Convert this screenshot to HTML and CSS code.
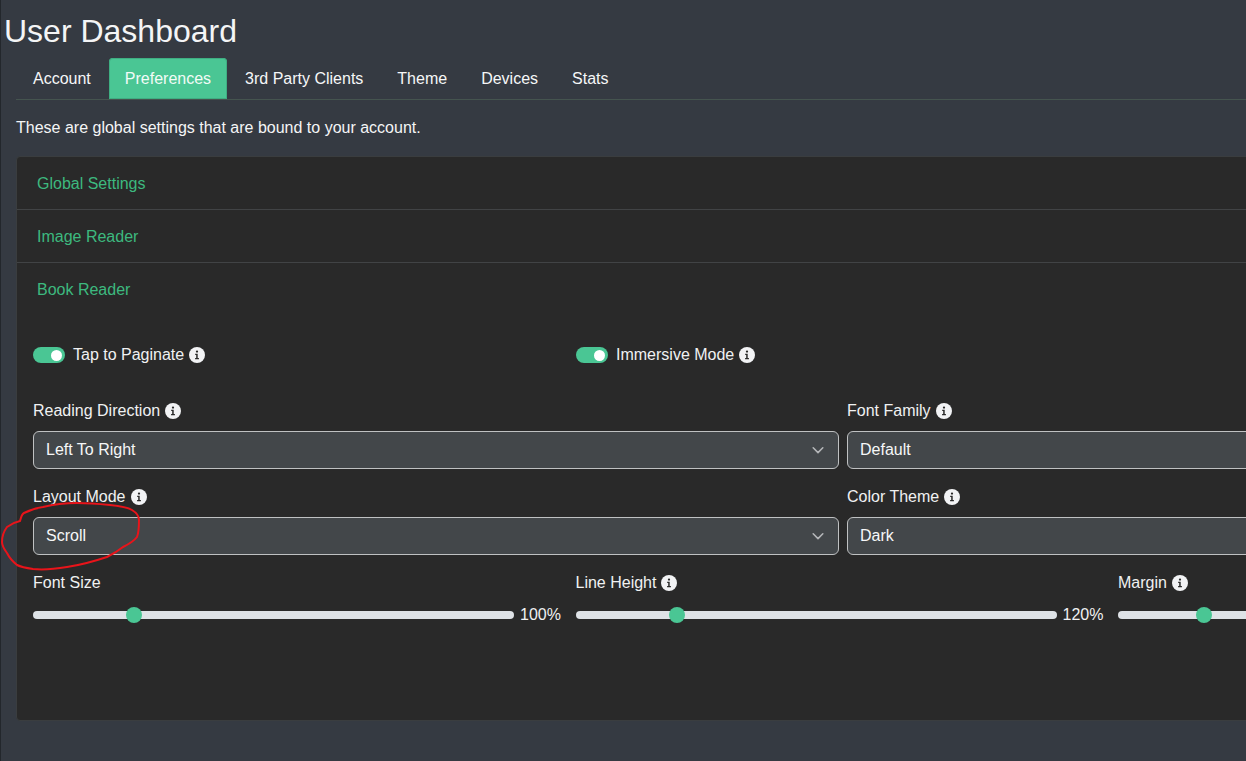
FILE: index.html
```html
<!DOCTYPE html>
<html lang="en">
<head>
<meta charset="utf-8">
<title>User Dashboard</title>
<link rel="stylesheet" href="styles.css">
</head>
<body>
<svg width="0" height="0" class="defs" aria-hidden="true">
  <symbol id="info" viewBox="0 0 16 16">
    <circle cx="8" cy="8" r="8" fill="#f2f3f5"/>
    <circle cx="8" cy="4.6" r="1.15" fill="#292929"/>
    <path d="M6.2 6.8H8.7V10.9H9.9V12.2H6.1V10.9H7.2V8.1H6.2Z" fill="#292929"/>
  </symbol>
  <symbol id="chev" viewBox="0 0 16 16">
    <path d="M2.5 5.5L8 11L13.5 5.5" fill="none" stroke="#b4b6b8" stroke-width="1.8" stroke-linecap="round" stroke-linejoin="round"/>
  </symbol>
</svg>
<main class="page">
  <h1 class="title">User Dashboard</h1>
  <nav class="tabs">
    <a class="tab">Account</a>
    <a class="tab active">Preferences</a>
    <a class="tab">3rd Party Clients</a>
    <a class="tab">Theme</a>
    <a class="tab">Devices</a>
    <a class="tab">Stats</a>
  </nav>
  <p class="intro">These are global settings that are bound to your account.</p>
  <section class="card">
    <h2 class="acc-head">Global Settings</h2>
    <h2 class="acc-head">Image Reader</h2>
    <h2 class="acc-head open">Book Reader</h2>
    <div class="acc-body">
      <div class="toggles">
        <div class="toggle-cell">
          <span class="switch"></span><span class="lbl">Tap to Paginate</span>
          <svg class="ico"><use href="#info"/></svg>
        </div>
        <div class="toggle-cell">
          <span class="switch"></span><span class="lbl">Immersive Mode</span>
          <svg class="ico"><use href="#info"/></svg>
        </div>
      </div>
      <div class="selects">
        <div class="field">
          <div class="label-row"><span class="lbl">Reading Direction</span><svg class="ico"><use href="#info"/></svg></div>
          <div class="select"><span>Left To Right</span><svg class="chev"><use href="#chev"/></svg></div>
        </div>
        <div class="field">
          <div class="label-row"><span class="lbl">Font Family</span><svg class="ico"><use href="#info"/></svg></div>
          <div class="select"><span>Default</span><svg class="chev"><use href="#chev"/></svg></div>
        </div>
        <div class="field">
          <div class="label-row"><span class="lbl">Layout Mode</span><svg class="ico"><use href="#info"/></svg></div>
          <div class="select"><span>Scroll</span><svg class="chev"><use href="#chev"/></svg></div>
        </div>
        <div class="field">
          <div class="label-row"><span class="lbl">Color Theme</span><svg class="ico"><use href="#info"/></svg></div>
          <div class="select"><span>Dark</span><svg class="chev"><use href="#chev"/></svg></div>
        </div>
      </div>
      <div class="sliders">
        <div class="slider-cell">
          <div class="label-row"><span class="lbl">Font Size</span></div>
          <div class="slider-row"><div class="track"><span class="thumb" style="left:93px"></span></div><span class="val">100%</span></div>
        </div>
        <div class="slider-cell">
          <div class="label-row"><span class="lbl">Line Height</span><svg class="ico"><use href="#info"/></svg></div>
          <div class="slider-row"><div class="track"><span class="thumb" style="left:93px"></span></div><span class="val">120%</span></div>
        </div>
        <div class="slider-cell">
          <div class="label-row"><span class="lbl">Margin</span><svg class="ico"><use href="#info"/></svg></div>
          <div class="slider-row"><div class="track"><span class="thumb" style="left:78px"></span></div></div>
        </div>
      </div>
    </div>
  </section>
</main>
<svg class="scribble" width="150" height="80" viewBox="0 500 150 80" aria-hidden="true">
  <path d="M20 521C21 517 22 514 24 513C30 510 36 508 43 507C55 504 66 503 77 503C89 503 100 504 110 505C119 506 127 507 132 510C137 513 139 516 139 520C139 527 139 532 137 537C134 541 129 544 123 547C118 551 113 554 107 557C95 561 81 565 67 567C55 569 43 570 33 569C26 568 21 567 17 565C12 561 9 557 7 553C4 549 2 545 2 542C2 536 4 531 7 527C11 524 15 522 20 521Z" fill="none" stroke="#e8141a" stroke-width="2"/>
</svg>
</body>
</html>
```
FILE: styles.css
```css
* { box-sizing: border-box; }
html, body { margin: 0; height: 100%; }
body {
  width: 1246px;
  height: 761px;
  overflow: hidden;
  background: #353a42;
  color: #f4f5f6;
  font-family: "Liberation Sans", Arial, sans-serif;
  font-size: 16px;
  line-height: 24px;
  position: relative;
}
.defs { position: absolute; }
.page {
  height: 761px;
  border-left: 1px solid #23272c;
  padding: 12px 0 0 15px;
  overflow: hidden;
}
.title {
  margin: 0 0 8px -12px;
  font-size: 32px;
  font-weight: 400;
  line-height: 38px;
  color: #f4f5f6;
}
.tabs {
  display: flex;
  height: 42px;
  padding-left: 1px;
  border-bottom: 1px solid #45544f;
  width: 1300px;
}
.tab {
  padding: 8px 16px;
  height: 41px;
  display: flex;
  align-items: center;
  border-radius: 4px 4px 0 0;
  margin-right: 2px;
  color: #f6f7f8;
}
.tab.active { background: #4ac694; color: #f2fbf7; box-shadow: inset 0 0 0 1px #3fae82; }
.intro { margin: 0; padding-top: 16px; height: 56px; }
.card {
  width: 1700px;
  height: 565px;
  background: #292929;
  border: 1px solid #3a3d3f;
  border-radius: 4px;
}
.acc-head {
  margin: 0;
  height: 53px;
  padding: 15px 20px 0;
  font-size: 16px;
  font-weight: 400;
  line-height: 24px;
  color: #3db97f;
  border-bottom: 1px solid #414345;
}
.acc-head.open { border-bottom: 0; }
.acc-body { padding: 31px 16px 0; }
.toggles { display: flex; height: 52px; }
.toggle-cell { width: 543px; display: flex; align-items: center; height: 16px; }
.switch {
  width: 32px;
  height: 16px;
  border-radius: 8px;
  background: #4ac694;
  position: relative;
  margin-right: 8px;
}
.switch::after {
  content: "";
  position: absolute;
  right: 3px;
  top: 2.5px;
  width: 11px;
  height: 11px;
  border-radius: 50%;
  background: #fff;
}
.lbl { color: #f0f1f2; }
.ico { width: 16px; height: 16px; margin-left: 5px; flex: none; }
.selects {
  display: grid;
  grid-template-columns: 806px 806px;
  column-gap: 8px;
  row-gap: 16px;
}
.label-row { display: flex; align-items: center; height: 24px; margin-bottom: 8px; }
.select {
  height: 38px;
  border: 1px solid #bfc1c2;
  border-radius: 6px;
  background: #43474a;
  padding: 0 12px;
  display: flex;
  align-items: center;
  justify-content: space-between;
  color: #f6f7f8;
}
.chev { width: 14px; height: 14px; margin-right: 1px; }
.sliders { display: flex; margin-top: 16px; }
.slider-cell { width: 542.5px; flex: none; }
.slider-row { display: flex; align-items: center; height: 24px; margin-top: 0; }
.track {
  width: 481px;
  height: 8px;
  border-radius: 4px;
  background: #dee2e6;
  position: relative;
  flex: none;
}
.thumb {
  position: absolute;
  top: -4px;
  width: 16px;
  height: 16px;
  border-radius: 50%;
  background: #4ac694;
}
.val { margin-left: 6px; color: #f0f1f2; }
.scribble { position: absolute; left: 0; top: 500px; }
```
